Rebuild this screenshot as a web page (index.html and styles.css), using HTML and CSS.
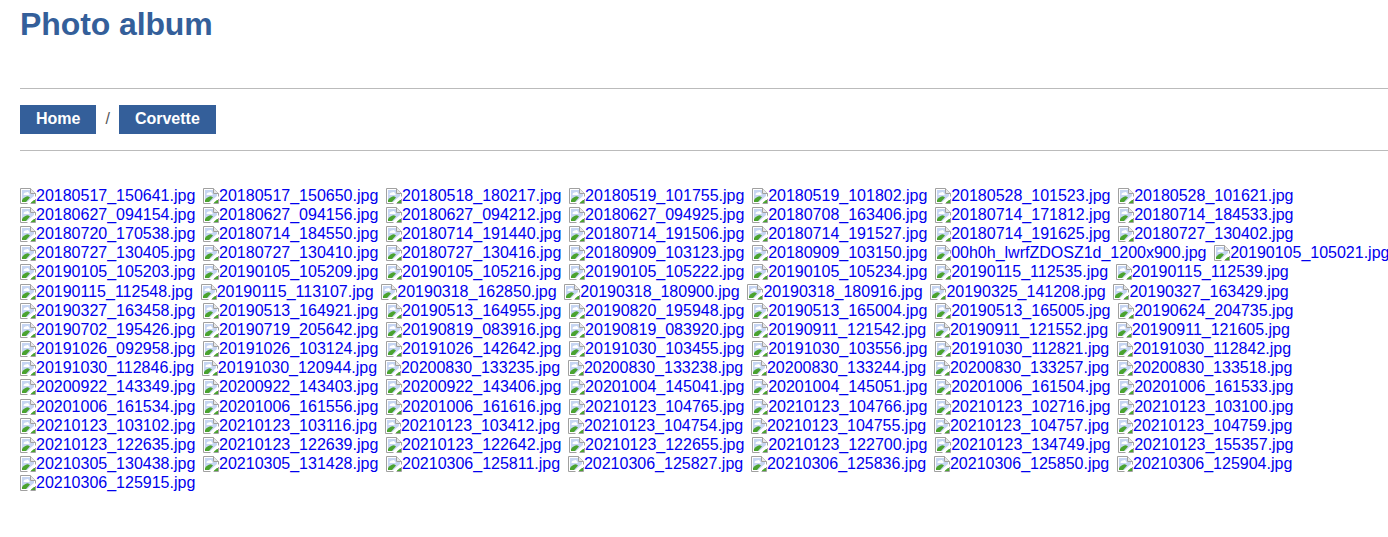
FILE: index.html
```html
<!DOCTYPE html>
<html lang="en">
<head>
<meta charset="utf-8">
<title>Photo album</title>
<link rel="stylesheet" href="styles.css">
</head>
<body>
<svg class="sprite" width="0" height="0" aria-hidden="true">
  <symbol id="broken" viewBox="0 0 16 16">
    <path d="M.5.5H10.500L15.500 5.500V8.500L8 15.500H.5Z" fill="#fff"/>
    <path d="M7.500 15.500H.5V.5H10.500L15.500 5.500V8.500" fill="none" stroke="#a0a0a0"/>
    <path d="M2 2H10V6H14V8L7 14H2Z" fill="#c6d5f2"/>
    <path d="M3.500 6.500C3.500 5 5 4.500 6 4.500C7 3.500 9 4 9 5.500C10 5.700 10 7 9 7H4.500C3.800 7 3.500 6.900 3.500 6.500Z" fill="#fff"/>
    <path d="M2 14V12C4 9.500 6 8.500 8 8.300L10 9.500L6 14Z" fill="#4aa32f"/>
    <path d="M10.500.5V5.500H15.500" fill="#e8e8e8" stroke="#a0a0a0"/>
    <path d="M15.500 11V15.500H10.500" fill="none" stroke="#a0a0a0"/>
    <path d="M11 15H15V12H14L11 14.500Z" fill="#4aa32f"/>
  </symbol>
</svg>
<header class="head">
  <h1 class="title">Photo album</h1>
</header>
<hr class="rule">
<nav class="crumbs">
  <a class="crumb" href="#">Home</a>
  <span class="sep">/</span>
  <a class="crumb" href="#">Corvette</a>
</nav>
<hr class="rule">
<main class="album">
<a class="pic" href="#"><svg class="ico"><use href="#broken"/></svg>20180517_150641.jpg</a>
<a class="pic" href="#"><svg class="ico"><use href="#broken"/></svg>20180517_150650.jpg</a>
<a class="pic" href="#"><svg class="ico"><use href="#broken"/></svg>20180518_180217.jpg</a>
<a class="pic" href="#"><svg class="ico"><use href="#broken"/></svg>20180519_101755.jpg</a>
<a class="pic" href="#"><svg class="ico"><use href="#broken"/></svg>20180519_101802.jpg</a>
<a class="pic" href="#"><svg class="ico"><use href="#broken"/></svg>20180528_101523.jpg</a>
<a class="pic" href="#"><svg class="ico"><use href="#broken"/></svg>20180528_101621.jpg</a>
<a class="pic" href="#"><svg class="ico"><use href="#broken"/></svg>20180627_094154.jpg</a>
<a class="pic" href="#"><svg class="ico"><use href="#broken"/></svg>20180627_094156.jpg</a>
<a class="pic" href="#"><svg class="ico"><use href="#broken"/></svg>20180627_094212.jpg</a>
<a class="pic" href="#"><svg class="ico"><use href="#broken"/></svg>20180627_094925.jpg</a>
<a class="pic" href="#"><svg class="ico"><use href="#broken"/></svg>20180708_163406.jpg</a>
<a class="pic" href="#"><svg class="ico"><use href="#broken"/></svg>20180714_171812.jpg</a>
<a class="pic" href="#"><svg class="ico"><use href="#broken"/></svg>20180714_184533.jpg</a>
<a class="pic" href="#"><svg class="ico"><use href="#broken"/></svg>20180720_170538.jpg</a>
<a class="pic" href="#"><svg class="ico"><use href="#broken"/></svg>20180714_184550.jpg</a>
<a class="pic" href="#"><svg class="ico"><use href="#broken"/></svg>20180714_191440.jpg</a>
<a class="pic" href="#"><svg class="ico"><use href="#broken"/></svg>20180714_191506.jpg</a>
<a class="pic" href="#"><svg class="ico"><use href="#broken"/></svg>20180714_191527.jpg</a>
<a class="pic" href="#"><svg class="ico"><use href="#broken"/></svg>20180714_191625.jpg</a>
<a class="pic" href="#"><svg class="ico"><use href="#broken"/></svg>20180727_130402.jpg</a>
<a class="pic" href="#"><svg class="ico"><use href="#broken"/></svg>20180727_130405.jpg</a>
<a class="pic" href="#"><svg class="ico"><use href="#broken"/></svg>20180727_130410.jpg</a>
<a class="pic" href="#"><svg class="ico"><use href="#broken"/></svg>20180727_130416.jpg</a>
<a class="pic" href="#"><svg class="ico"><use href="#broken"/></svg>20180909_103123.jpg</a>
<a class="pic" href="#"><svg class="ico"><use href="#broken"/></svg>20180909_103150.jpg</a>
<a class="pic" href="#"><svg class="ico"><use href="#broken"/></svg>00h0h_lwrfZDOSZ1d_1200x900.jpg</a>
<a class="pic" href="#"><svg class="ico"><use href="#broken"/></svg>20190105_105021.jpg</a>
<a class="pic" href="#"><svg class="ico"><use href="#broken"/></svg>20190105_105203.jpg</a>
<a class="pic" href="#"><svg class="ico"><use href="#broken"/></svg>20190105_105209.jpg</a>
<a class="pic" href="#"><svg class="ico"><use href="#broken"/></svg>20190105_105216.jpg</a>
<a class="pic" href="#"><svg class="ico"><use href="#broken"/></svg>20190105_105222.jpg</a>
<a class="pic" href="#"><svg class="ico"><use href="#broken"/></svg>20190105_105234.jpg</a>
<a class="pic" href="#"><svg class="ico"><use href="#broken"/></svg>20190115_112535.jpg</a>
<a class="pic" href="#"><svg class="ico"><use href="#broken"/></svg>20190115_112539.jpg</a>
<a class="pic" href="#"><svg class="ico"><use href="#broken"/></svg>20190115_112548.jpg</a>
<a class="pic" href="#"><svg class="ico"><use href="#broken"/></svg>20190115_113107.jpg</a>
<a class="pic" href="#"><svg class="ico"><use href="#broken"/></svg>20190318_162850.jpg</a>
<a class="pic" href="#"><svg class="ico"><use href="#broken"/></svg>20190318_180900.jpg</a>
<a class="pic" href="#"><svg class="ico"><use href="#broken"/></svg>20190318_180916.jpg</a>
<a class="pic" href="#"><svg class="ico"><use href="#broken"/></svg>20190325_141208.jpg</a>
<a class="pic" href="#"><svg class="ico"><use href="#broken"/></svg>20190327_163429.jpg</a>
<a class="pic" href="#"><svg class="ico"><use href="#broken"/></svg>20190327_163458.jpg</a>
<a class="pic" href="#"><svg class="ico"><use href="#broken"/></svg>20190513_164921.jpg</a>
<a class="pic" href="#"><svg class="ico"><use href="#broken"/></svg>20190513_164955.jpg</a>
<a class="pic" href="#"><svg class="ico"><use href="#broken"/></svg>20190820_195948.jpg</a>
<a class="pic" href="#"><svg class="ico"><use href="#broken"/></svg>20190513_165004.jpg</a>
<a class="pic" href="#"><svg class="ico"><use href="#broken"/></svg>20190513_165005.jpg</a>
<a class="pic" href="#"><svg class="ico"><use href="#broken"/></svg>20190624_204735.jpg</a>
<a class="pic" href="#"><svg class="ico"><use href="#broken"/></svg>20190702_195426.jpg</a>
<a class="pic" href="#"><svg class="ico"><use href="#broken"/></svg>20190719_205642.jpg</a>
<a class="pic" href="#"><svg class="ico"><use href="#broken"/></svg>20190819_083916.jpg</a>
<a class="pic" href="#"><svg class="ico"><use href="#broken"/></svg>20190819_083920.jpg</a>
<a class="pic" href="#"><svg class="ico"><use href="#broken"/></svg>20190911_121542.jpg</a>
<a class="pic" href="#"><svg class="ico"><use href="#broken"/></svg>20190911_121552.jpg</a>
<a class="pic" href="#"><svg class="ico"><use href="#broken"/></svg>20190911_121605.jpg</a>
<a class="pic" href="#"><svg class="ico"><use href="#broken"/></svg>20191026_092958.jpg</a>
<a class="pic" href="#"><svg class="ico"><use href="#broken"/></svg>20191026_103124.jpg</a>
<a class="pic" href="#"><svg class="ico"><use href="#broken"/></svg>20191026_142642.jpg</a>
<a class="pic" href="#"><svg class="ico"><use href="#broken"/></svg>20191030_103455.jpg</a>
<a class="pic" href="#"><svg class="ico"><use href="#broken"/></svg>20191030_103556.jpg</a>
<a class="pic" href="#"><svg class="ico"><use href="#broken"/></svg>20191030_112821.jpg</a>
<a class="pic" href="#"><svg class="ico"><use href="#broken"/></svg>20191030_112842.jpg</a>
<a class="pic" href="#"><svg class="ico"><use href="#broken"/></svg>20191030_112846.jpg</a>
<a class="pic" href="#"><svg class="ico"><use href="#broken"/></svg>20191030_120944.jpg</a>
<a class="pic" href="#"><svg class="ico"><use href="#broken"/></svg>20200830_133235.jpg</a>
<a class="pic" href="#"><svg class="ico"><use href="#broken"/></svg>20200830_133238.jpg</a>
<a class="pic" href="#"><svg class="ico"><use href="#broken"/></svg>20200830_133244.jpg</a>
<a class="pic" href="#"><svg class="ico"><use href="#broken"/></svg>20200830_133257.jpg</a>
<a class="pic" href="#"><svg class="ico"><use href="#broken"/></svg>20200830_133518.jpg</a>
<a class="pic" href="#"><svg class="ico"><use href="#broken"/></svg>20200922_143349.jpg</a>
<a class="pic" href="#"><svg class="ico"><use href="#broken"/></svg>20200922_143403.jpg</a>
<a class="pic" href="#"><svg class="ico"><use href="#broken"/></svg>20200922_143406.jpg</a>
<a class="pic" href="#"><svg class="ico"><use href="#broken"/></svg>20201004_145041.jpg</a>
<a class="pic" href="#"><svg class="ico"><use href="#broken"/></svg>20201004_145051.jpg</a>
<a class="pic" href="#"><svg class="ico"><use href="#broken"/></svg>20201006_161504.jpg</a>
<a class="pic" href="#"><svg class="ico"><use href="#broken"/></svg>20201006_161533.jpg</a>
<a class="pic" href="#"><svg class="ico"><use href="#broken"/></svg>20201006_161534.jpg</a>
<a class="pic" href="#"><svg class="ico"><use href="#broken"/></svg>20201006_161556.jpg</a>
<a class="pic" href="#"><svg class="ico"><use href="#broken"/></svg>20201006_161616.jpg</a>
<a class="pic" href="#"><svg class="ico"><use href="#broken"/></svg>20210123_104765.jpg</a>
<a class="pic" href="#"><svg class="ico"><use href="#broken"/></svg>20210123_104766.jpg</a>
<a class="pic" href="#"><svg class="ico"><use href="#broken"/></svg>20210123_102716.jpg</a>
<a class="pic" href="#"><svg class="ico"><use href="#broken"/></svg>20210123_103100.jpg</a>
<a class="pic" href="#"><svg class="ico"><use href="#broken"/></svg>20210123_103102.jpg</a>
<a class="pic" href="#"><svg class="ico"><use href="#broken"/></svg>20210123_103116.jpg</a>
<a class="pic" href="#"><svg class="ico"><use href="#broken"/></svg>20210123_103412.jpg</a>
<a class="pic" href="#"><svg class="ico"><use href="#broken"/></svg>20210123_104754.jpg</a>
<a class="pic" href="#"><svg class="ico"><use href="#broken"/></svg>20210123_104755.jpg</a>
<a class="pic" href="#"><svg class="ico"><use href="#broken"/></svg>20210123_104757.jpg</a>
<a class="pic" href="#"><svg class="ico"><use href="#broken"/></svg>20210123_104759.jpg</a>
<a class="pic" href="#"><svg class="ico"><use href="#broken"/></svg>20210123_122635.jpg</a>
<a class="pic" href="#"><svg class="ico"><use href="#broken"/></svg>20210123_122639.jpg</a>
<a class="pic" href="#"><svg class="ico"><use href="#broken"/></svg>20210123_122642.jpg</a>
<a class="pic" href="#"><svg class="ico"><use href="#broken"/></svg>20210123_122655.jpg</a>
<a class="pic" href="#"><svg class="ico"><use href="#broken"/></svg>20210123_122700.jpg</a>
<a class="pic" href="#"><svg class="ico"><use href="#broken"/></svg>20210123_134749.jpg</a>
<a class="pic" href="#"><svg class="ico"><use href="#broken"/></svg>20210123_155357.jpg</a>
<a class="pic" href="#"><svg class="ico"><use href="#broken"/></svg>20210305_130438.jpg</a>
<a class="pic" href="#"><svg class="ico"><use href="#broken"/></svg>20210305_131428.jpg</a>
<a class="pic" href="#"><svg class="ico"><use href="#broken"/></svg>20210306_125811.jpg</a>
<a class="pic" href="#"><svg class="ico"><use href="#broken"/></svg>20210306_125827.jpg</a>
<a class="pic" href="#"><svg class="ico"><use href="#broken"/></svg>20210306_125836.jpg</a>
<a class="pic" href="#"><svg class="ico"><use href="#broken"/></svg>20210306_125850.jpg</a>
<a class="pic" href="#"><svg class="ico"><use href="#broken"/></svg>20210306_125904.jpg</a>
<a class="pic" href="#"><svg class="ico"><use href="#broken"/></svg>20210306_125915.jpg</a>
</main>
</body>
</html>
```

FILE: styles.css
```css
html, body {
  margin: 0;
  padding: 0;
  background: #fff;
  overflow-x: hidden;
}
body {
  font-family: "Liberation Sans", Arial, sans-serif;
  font-size: 16px;
  color: #333;
  padding-left: 20px;
}
.sprite {
  display: block;
  height: 0;
}
.head {
  height: 88px;
}
.title {
  margin: 0;
  padding-top: 6px;
  font-size: 32px;
  line-height: 37px;
  font-weight: 700;
  letter-spacing: -0.1px;
  color: #345f9a;
}
.rule {
  margin: 0;
  border: 0;
  height: 1px;
  background: #bbb;
}
.crumbs {
  display: flex;
  align-items: center;
  gap: 9px;
  height: 29px;
  padding: 16px 0;
}
.crumb {
  display: block;
  padding: 0 16px;
  line-height: 27px;
  height: 29px;
  font-weight: 700;
  color: #fff;
  background: #345f9a;
  text-decoration: none;
}
.sep {
  color: #555;
  margin-top: -2px;
}
.album {
  width: 1380px;
  padding-top: 34.7px;
  line-height: 19.17px;
}
.pic {
  color: #00e;
  text-decoration: none;
  white-space: nowrap;
  margin-right: 3.3px;
}
.ico {
  width: 16px;
  height: 16px;
  vertical-align: -3px;
}
```
